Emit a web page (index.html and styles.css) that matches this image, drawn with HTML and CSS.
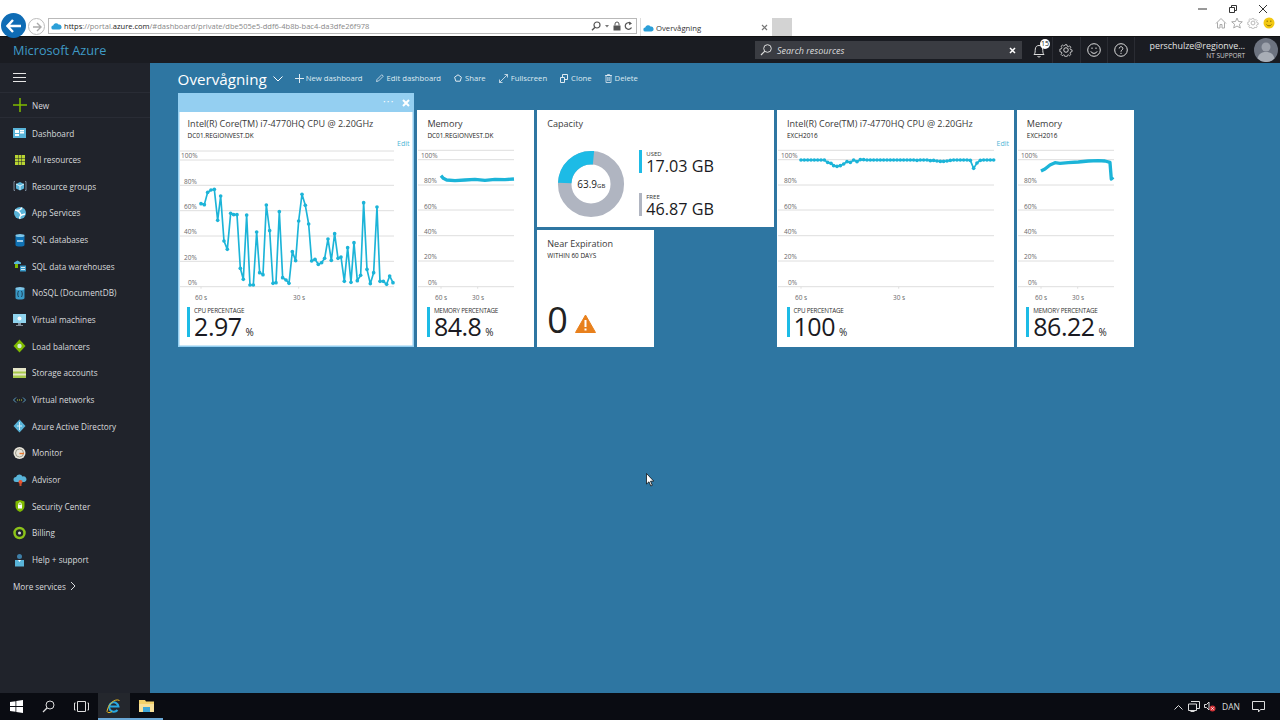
FILE: index.html
```html
<!DOCTYPE html>
<html lang="en">
<head>
    <meta charset="UTF-8">
    <meta name="viewport" content="width=device-width, initial-scale=1.0">
    <title>Overvågning - Microsoft Azure</title>
    <link rel="stylesheet" href="styles.css">
</head>
<body>
    <!-- Browser chrome -->
    <div class="browser">
        <div class="window-controls">
            <svg width="10" height="10" viewBox="0 0 10 10"><path d="M0 5H9" stroke="#333" fill="none"/></svg>
            <svg width="10" height="10" viewBox="0 0 10 10"><path d="M1.5 3.5h5v5h-5zM3.5 3.5v-2h5v5h-2" stroke="#333" fill="none"/></svg>
            <svg width="10" height="10" viewBox="0 0 10 10"><path d="M1 1L9 9M9 1L1 9" stroke="#333" fill="none"/></svg>
        </div>
        <div class="nav-row">
            <div class="back-btn">
                <svg width="16" height="14" viewBox="0 0 16 14"><path d="M7 1L1.5 7L7 13M2 7H15" stroke="#fff" stroke-width="2.4" fill="none"/></svg>
            </div>
            <div class="forward-btn">
                <svg width="10" height="10" viewBox="0 0 10 10"><path d="M5 1L9 5L5 9M9 5H1" stroke="#aaa" stroke-width="1.4" fill="none"/></svg>
            </div>
            <div class="address-bar">
                <svg class="cloud" width="11" height="8" viewBox="0 0 11 8"><path d="M2.5 7.5a2 2 0 0 1-.3-4A3 3 0 0 1 7.5 2.5a2.5 2.5 0 0 1 1 5z" fill="#2b9fd8"/></svg>
                <span class="url"><b>https</b>://portal.<b>azure.com</b>/#dashboard/private/dbe505e5-ddf6-4b8b-bac4-da3dfe26f978</span>
                <div class="address-tools">
                    <svg width="10" height="10" viewBox="0 0 10 10"><circle cx="6" cy="4" r="3" stroke="#555" fill="none" stroke-width="1.2"/><path d="M4 6.2L1 9.2" stroke="#555" stroke-width="1.4"/></svg>
                    <svg width="6" height="10" viewBox="0 0 6 10"><path d="M1 4h4L3 6.5z" fill="#777"/></svg>
                    <svg width="8" height="10" viewBox="0 0 8 10"><path d="M2 4.5V3a2 2 0 0 1 4 0v1.5" stroke="#555" fill="none"/><rect x="0.5" y="4.5" width="7" height="5" fill="#555"/></svg>
                    <svg width="9" height="10" viewBox="0 0 9 10"><path d="M7.5 6.5A3.3 3.3 0 1 1 6.5 2.3" stroke="#555" stroke-width="1.2" fill="none"/><path d="M5 0.5L8 2.5L5.2 4.2z" fill="#555"/></svg>
                </div>
            </div>
            <div class="browser-tab">
                <svg width="11" height="8" viewBox="0 0 11 8"><path d="M2.5 7.5a2 2 0 0 1-.3-4A3 3 0 0 1 7.5 2.5a2.5 2.5 0 0 1 1 5z" fill="#2b9fd8"/></svg>
                <span class="tab-title">Overvågning</span>
                <svg class="tab-close" width="7" height="7" viewBox="0 0 7 7"><path d="M1 1L6 6M6 1L1 6" stroke="#777" stroke-width="1.2"/></svg>
            </div>
            <div class="new-tab"></div>
            <div class="browser-tools">
                <svg width="12" height="12" viewBox="0 0 12 12"><path d="M1 6.5L6 1.5L11 6.5M2.5 5.5V11H5V7.5H7V11H9.5V5.5" stroke="#aaa" fill="none"/></svg>
                <svg width="12" height="12" viewBox="0 0 12 12"><path d="M6 1L7.5 4.5L11.3 4.8L8.4 7.3L9.3 11L6 9L2.7 11L3.6 7.3L.7 4.8L4.5 4.5z" stroke="#aaa" fill="none"/></svg>
                <svg width="12" height="12" viewBox="0 0 16 16"><use href="#gear" stroke="#aaa"/></svg>
                <svg width="12" height="12" viewBox="0 0 12 12"><circle cx="6" cy="6" r="5.5" fill="#f2c811"/><path d="M3.5 7.5a3 3 0 0 0 5 0" stroke="#8a6d00" fill="none"/><path d="M4.2 3.5v1.5M7.8 3.5v1.5" stroke="#8a6d00"/></svg>
            </div>
        </div>
    </div>

    <!-- Shared icon shapes -->
    <svg class="icon-defs" width="0" height="0">
        <defs>
            <g id="gear" fill="none" stroke-width="1.1">
                <circle cx="8" cy="8" r="2.6"/>
                <path d="M6.8 1h2.4l.4 2 1.5.7 1.8-1.1 1.6 1.7-1.1 1.7.7 1.5 2 .4v2.4l-2 .4-.7 1.5 1.1 1.8-1.7 1.6-1.7-1.1-1.5.7-.4 2H6.8l-.4-2-1.5-.7-1.8 1.1-1.6-1.7 1.1-1.7-.7-1.5-2-.4V6.8l2-.4.7-1.5-1.1-1.8 1.7-1.6 1.7 1.1 1.5-.7z" transform="translate(1.1 1.1) scale(.86)"/>
            </g>
            <marker id="dot" markerWidth="3" markerHeight="3" refX="1.5" refY="1.5" markerUnits="strokeWidth">
                <circle cx="1.5" cy="1.5" r="1.1" fill="#1cb4d8"/>
            </marker>
        </defs>
    </svg>

    <!-- Azure top bar -->
    <header class="topbar">
        <div class="brand">Microsoft Azure</div>
        <div class="search">
            <svg width="12" height="12" viewBox="0 0 12 12"><circle cx="7.5" cy="4.5" r="3.8" stroke="#ddd" fill="none"/><path d="M4.8 7.2L1 11" stroke="#ddd" stroke-width="1.2"/></svg>
            <span class="search-text">Search resources</span>
            <svg class="search-clear" width="7" height="7" viewBox="0 0 7 7"><path d="M1 1L6 6M6 1L1 6" stroke="#fff" stroke-width="1.5"/></svg>
        </div>
        <div class="top-icon bell">
            <svg width="14" height="15" viewBox="0 0 14 15"><path d="M2 11.5c1.5-1.5 1-3 1.3-5.5C3.6 3.5 5 2.5 7 2.5S10.4 3.5 10.7 6c.3 2.5-.2 4 1.3 5.5zM5.5 13a1.6 1.6 0 0 0 3 0" stroke="#ddd" fill="none"/></svg>
            <span class="badge">15</span>
        </div>
        <div class="top-icon">
            <svg width="14" height="14" viewBox="0 0 16 16"><use href="#gear" stroke="#ddd"/></svg>
        </div>
        <div class="top-icon">
            <svg width="14" height="14" viewBox="0 0 14 14"><circle cx="7" cy="7" r="6.3" stroke="#ddd" fill="none"/><path d="M3.8 8.3a3.5 3.5 0 0 0 6.4 0" stroke="#ddd" fill="none"/><path d="M5 4.5v1.5M9 4.5v1.5" stroke="#ddd"/></svg>
        </div>
        <div class="top-icon">
            <svg width="14" height="14" viewBox="0 0 14 14"><circle cx="7" cy="7" r="6.3" stroke="#ddd" fill="none"/><path d="M5.2 5.5a1.8 1.8 0 1 1 2.8 1.5c-.7.5-1 .8-1 1.7" stroke="#ddd" fill="none"/><path d="M7 9.8v1.2" stroke="#ddd"/></svg>
        </div>
        <div class="account">
            <div class="account-name">perschulze@regionve...</div>
            <div class="account-org">NT SUPPORT</div>
        </div>
        <svg class="avatar" width="24" height="24" viewBox="0 0 24 24"><circle cx="12" cy="12" r="12" fill="#6d7380"/><circle cx="12" cy="9" r="4.5" fill="#9ca1ab"/><path d="M3.5 20.5c1-5 4.5-6.5 8.5-6.5s7.5 1.5 8.5 6.5a12 12 0 0 1-17 0z" fill="#a8adb6"/></svg>
    </header>

    <div class="workspace">
        <!-- Sidebar -->
        <nav class="sidebar">
            <div class="hamburger">
                <svg width="13" height="9" viewBox="0 0 13 9"><path d="M0 .5H13M0 4.5H13M0 8.5H13" stroke="#e6e6e6"/></svg>
            </div>
            <a class="nav-item nav-new">
                <svg width="14" height="14" viewBox="0 0 14 14"><path d="M7 0V14M0 7H14" stroke="#7fba00" stroke-width="1.5"/></svg>
                New
            </a>
            <div class="nav-list">
                <a class="nav-item">
                    <svg width="14" height="14" viewBox="0 0 14 14"><rect y="2" width="13" height="10" fill="#59b4d9"/><path d="M2 4h4v3H2zM7 4h4v1.5H7zM7 6h4v1.5H7zM2 8h4v2H2z" fill="#fff"/></svg>
                    Dashboard
                </a>
                <a class="nav-item">
                    <svg width="14" height="14" viewBox="0 0 14 14"><path d="M2 2h3v3H2zM5.5 2h3v3h-3zM9 2h3v3H9zM2 5.5h3v3H2zM5.5 5.5h3v3h-3zM9 5.5h3v3H9zM2 9h3v3H2zM5.5 9h3v3h-3zM9 9h3v3H9z" fill="#b8d432"/></svg>
                    All resources
                </a>
                <a class="nav-item">
                    <svg width="14" height="14" viewBox="0 0 14 14"><path d="M7 3l4 2v4.5l-4 2-4-2V5z" fill="#59b4d9"/><path d="M3 5l4 2 4-2M7 7v4" stroke="#fff" stroke-width=".8" fill="none"/><path d="M2 2.5H1v9h1M12 2.5h1v9h-1" stroke="#7a8a9a" fill="none"/></svg>
                    Resource groups
                </a>
                <a class="nav-item">
                    <svg width="14" height="14" viewBox="0 0 14 14"><circle cx="7" cy="7" r="6" fill="#59b4d9"/><path d="M2 4c3 .5 5 2 6 5M7 13c-1-2 0-4 5-5M9 1.5C8 3.5 6 4.5 4 4.5" stroke="#fff" stroke-width="1.3" fill="none"/></svg>
                    App Services
                </a>
                <a class="nav-item">
                    <svg width="14" height="14" viewBox="0 0 14 14"><path d="M2.5 2.5v9.5c0 2 9 2 9 0V2.5z" fill="#0f72b5"/><ellipse cx="7" cy="2.5" rx="4.5" ry="1.5" fill="#7fc6e8"/><path d="M4 8h6" stroke="#cfeaf7" stroke-width="1.5"/></svg>
                    SQL databases
                </a>
                <a class="nav-item">
                    <svg width="14" height="14" viewBox="0 0 14 14"><path d="M1 3.5L4.5 1.5L8 3.5V5H1z" fill="#59b4d9"/><rect x="2" y="5" width="3" height="4" fill="#7fba00"/><path d="M7 6.5h6v6H7z" fill="#3999c6"/><path d="M8 8.5h4M8 10.5h4" stroke="#fff" stroke-width=".8"/></svg>
                    SQL data warehouses
                </a>
                <a class="nav-item">
                    <svg width="14" height="14" viewBox="0 0 14 14"><path d="M2.5 2.5v9.5c0 2 9 2 9 0V2.5z" fill="#3999c6"/><ellipse cx="7" cy="2.5" rx="4.5" ry="1.5" fill="#7fc6e8"/><path d="M5.5 5c-1 2-1 4 0 6M8.5 5c1 2 1 4 0 6" stroke="#1b3f56" fill="none"/></svg>
                    NoSQL (DocumentDB)
                </a>
                <a class="nav-item">
                    <svg width="14" height="14" viewBox="0 0 14 14"><rect y="1" width="13" height="9" fill="#8fd3ee"/><circle cx="6.5" cy="5.5" r="2" fill="#fff"/><path d="M5 10h3v2H5zM3 12h7v1H3z" fill="#7f8b96"/></svg>
                    Virtual machines
                </a>
                <a class="nav-item">
                    <svg width="14" height="14" viewBox="0 0 14 14"><path d="M6.5.5l6 6.5-6 6.5L.5 7z" fill="#7fba00"/><circle cx="6.5" cy="7" r="2.2" fill="#d4ecd0"/></svg>
                    Load balancers
                </a>
                <a class="nav-item">
                    <svg width="14" height="14" viewBox="0 0 14 14"><rect y="2" width="13" height="10" fill="#e5e5c8"/><path d="M0 5.5h13v2H0zM0 9.5h13V12H0z" fill="#a5c84a"/></svg>
                    Storage accounts
                </a>
                <a class="nav-item">
                    <svg width="14" height="14" viewBox="0 0 14 14"><path d="M3 4.5L.5 7L3 9.5M10 4.5L12.5 7L10 9.5" stroke="#5a9ec4" fill="none"/><path d="M4 7h1M6 7h1M8 7h1" stroke="#b8d432"/></svg>
                    Virtual networks
                </a>
                <a class="nav-item">
                    <svg width="14" height="14" viewBox="0 0 14 14"><path d="M6.5.5l6 6.5-6 6.5L.5 7z" fill="#59b4d9"/><path d="M6.5 3v8M4 7h5" stroke="#d7f0fa"/></svg>
                    Azure Active Directory
                </a>
                <a class="nav-item">
                    <svg width="14" height="14" viewBox="0 0 14 14"><circle cx="6.5" cy="7" r="6" fill="#e8e4da"/><circle cx="6.5" cy="7" r="4" fill="none" stroke="#9a9a8c"/><path d="M6.5 7.5H11" stroke="#e8772e" stroke-width="1.4"/></svg>
                    Monitor
                </a>
                <a class="nav-item">
                    <svg width="14" height="14" viewBox="0 0 14 14"><path d="M3 9a2.5 2.5 0 0 1 0-5 3.5 3.5 0 0 1 6.5-.5A2.8 2.8 0 0 1 11.5 9z" fill="#59b4d9"/><circle cx="7.5" cy="9" r="2" fill="#e8522e"/><path d="M6.5 11h2v2h-2z" fill="#c8502a"/></svg>
                    Advisor
                </a>
                <a class="nav-item">
                    <svg width="14" height="14" viewBox="0 0 14 14"><path d="M7 1l4.5 1.5V7c0 3-2 5-4.5 6C4.5 12 2.500 10 2.500 7V2.500z" fill="#7fba00"/><rect x="5" y="6" width="4" height="3.5" fill="#fff"/><path d="M5.8 6V5a1.2 1.2 0 0 1 2.4 0v1" stroke="#fff" fill="none"/></svg>
                    Security Center
                </a>
                <a class="nav-item">
                    <svg width="14" height="14" viewBox="0 0 14 14"><circle cx="6.5" cy="7" r="5" fill="#20232b" stroke="#8cc21a" stroke-width="2.5"/><circle cx="6.5" cy="7" r="1.5" fill="#d8dadd"/></svg>
                    Billing
                </a>
                <a class="nav-item">
                    <svg width="14" height="14" viewBox="0 0 14 14"><circle cx="6.5" cy="3.5" r="2.5" fill="#3e7fa8"/><path d="M2 7h9v6.5H2z" fill="#59b4d9"/><path d="M5 7l1.5 2L8 7z" fill="#fff"/></svg>
                    Help + support
                </a>
                <a class="nav-item nav-more">
                    More services
                    <svg width="6" height="10" viewBox="0 0 6 10"><path d="M1 1L5 5L1 9" stroke="#d8dadd" fill="none"/></svg>
                </a>
            </div>
        </nav>

        <!-- Dashboard -->
        <main class="dashboard">
            <div class="cmdbar">
                <h1 class="dash-title">Overvågning</h1>
                <svg class="dash-chevron" width="10" height="6" viewBox="0 0 10 6"><path d="M.5.5L5 5L9.5.5" stroke="#fff" fill="none"/></svg>
                <a class="cmd cmd-new">
                    <svg width="9" height="9" viewBox="0 0 9 9"><path d="M4.5 0V9M0 4.5H9" stroke="#dfeaf1"/></svg>
                    New dashboard
                </a>
                <a class="cmd">
                    <svg width="8" height="8" viewBox="0 0 8 8"><path d="M.5 7.5L1 5.5L5.8.7L7.3 2.2L2.5 7z" stroke="#dfeaf1" fill="none" stroke-width=".8"/></svg>
                    Edit dashboard
                </a>
                <a class="cmd">
                    <svg width="8" height="8" viewBox="0 0 8 8"><path d="M4 .8L7.4 3.2L6.2 7.2H1.8L.6 3.2z" stroke="#dfeaf1" fill="none"/></svg>
                    Share
                </a>
                <a class="cmd">
                    <svg width="9" height="9" viewBox="0 0 9 9"><path d="M.5 8.5L8.5.5M5.5.5h3v3M.5 5.5v3h3" stroke="#dfeaf1" fill="none" stroke-width=".8"/></svg>
                    Fullscreen
                </a>
                <a class="cmd">
                    <svg width="8" height="9" viewBox="0 0 8 9"><path d="M.5 3.5h4v5h-4zM2.5 3.5v-3h5v5h-3" stroke="#dfeaf1" fill="none"/></svg>
                    Clone
                </a>
                <a class="cmd">
                    <svg width="7" height="9" viewBox="0 0 7 9"><path d="M1 1.5h5V8.5H1zM0 1.5h7M2.5 1.5V.5h2v1M2.8 3v4M4.2 3v4" stroke="#dfeaf1" fill="none" stroke-width=".8"/></svg>
                    Delete
                </a>
            </div>

            <div class="tiles">
                <!-- CPU dc01 -->
                <section class="tile tile-wide tile-selected">
                    <div class="tile-bar">
                        <span class="tile-dots">···</span>
                        <svg width="8" height="8" viewBox="0 0 8 8"><path d="M1 1L7 7M7 1L1 7" stroke="#fff" stroke-width="2"/></svg>
                    </div>
                    <a class="edit-link">Edit</a>
                    <div class="tile-head">
                        <h2>Intel(R) Core(TM) i7-4770HQ CPU @ 2.20GHz</h2>
                        <p>DC01.REGIONVEST.DK</p>
                    </div>
                    <svg class="chart" width="236" height="156" viewBox="3 58 236 156">
                        <path class="grid" d="M5 61H219M5 70H219M5 95.3H219M5 120.7H219M5 146H219M5 171.3H219M5 196.7H219"/>
                        <text x="6" y="68">100%</text><text x="9" y="93.5">80%</text><text x="9" y="118.8">60%</text><text x="9" y="144.2">40%</text><text x="9" y="169.5">20%</text><text x="13" y="194.8">0%</text>
                        <path class="grid" d="M26 196.7v2M123.7 196.7v2"/>
                        <text x="20" y="210">60 s</text><text x="118" y="210">30 s</text>
                        <polyline class="line" transform="scale(.3333)" points="78,341 88,344 98,307 108,300 118,298 128,391 137,318 147,453 157,478 167,370 176,374 186,374 196,535 205,568 215,375 225,585 235,585 245,426 254,548 264,554 274,345 284,422 294,580 303,578 313,365 323,563 333,570 342,580 352,485 362,512 371,393 381,313 391,346 401,402 410,513 420,508 430,523 440,518 449,505 459,447 469,511 479,431 489,505 498,501 508,574 518,473 528,577 537,458 547,572 557,556 566,338 576,538 586,581 596,548 606,351 615,574 625,574 635,583 644,558 654,578"/>
                    </svg>
                    <div class="metric">
                        <span class="metric-bar"></span>
                        <div>
                            <div class="metric-label">CPU PERCENTAGE</div>
                            <div class="metric-value">2.97 <small>%</small></div>
                        </div>
                    </div>
                </section>

                <!-- Memory dc01 -->
                <section class="tile tile-tall">
                    <div class="tile-head">
                        <h2>Memory</h2>
                        <p>DC01.REGIONVEST.DK</p>
                    </div>
                    <svg class="chart" width="117" height="156" viewBox="2 43 117 156">
                        <path class="grid" d="M3 45.3H99M3 54.7H99M3 80H99M3 105H99M3 130.7H99M3 156H99M3 181.7H99"/>
                        <text x="6" y="53">100%</text><text x="9" y="78.3">80%</text><text x="9" y="103.5">60%</text><text x="9" y="128.9">40%</text><text x="9" y="154.2">20%</text><text x="13" y="179.5">0%</text>
                        <path class="grid" d="M26 181.7v2M62.7 181.7v2"/>
                        <text x="20" y="195">60 s</text><text x="57" y="195">30 s</text>
                        <polyline class="line line-thick" transform="scale(.3333)" points="78,212 85,220 95,225 120,227 150,225 180,223 210,226 240,223 270,224 297,222"/>
                    </svg>
                    <div class="metric">
                        <span class="metric-bar"></span>
                        <div>
                            <div class="metric-label">MEMORY PERCENTAGE</div>
                            <div class="metric-value">84.8 <small>%</small></div>
                        </div>
                    </div>
                </section>

                <!-- Capacity -->
                <section class="tile tile-capacity">
                    <div class="tile-head">
                        <h2>Capacity</h2>
                    </div>
                    <div class="capacity-body">
                        <div class="donut">
                            <svg width="68" height="68" viewBox="0 0 68 68">
                                <circle class="donut-free" cx="34" cy="34" r="26.3"/>
                                <circle class="donut-used" cx="34" cy="34" r="26.3" pathLength="100" stroke-dasharray="26 74" transform="rotate(182 34 34)"/>
                            </svg>
                            <span class="donut-total">63.9<small>GB</small></span>
                        </div>
                        <div class="capacity-legend">
                            <div class="legend-row">
                                <span class="metric-bar"></span>
                                <div class="legend-text">
                                    <div class="legend-label">USED</div>
                                    <div class="legend-value">17.03 GB</div>
                                </div>
                            </div>
                            <div class="legend-row">
                                <span class="metric-bar metric-bar-grey"></span>
                                <div class="legend-text">
                                    <div class="legend-label">FREE</div>
                                    <div class="legend-value">46.87 GB</div>
                                </div>
                            </div>
                        </div>
                    </div>
                </section>

                <!-- Near expiration -->
                <section class="tile tile-expire">
                    <div class="tile-head">
                        <h2>Near Expiration</h2>
                        <p>WITHIN 60 DAYS</p>
                    </div>
                    <div class="expire-body">
                        <span class="expire-count">0</span>
                        <svg width="21" height="19" viewBox="0 0 21 19"><path d="M10.5 1L20.5 18.5H.5z" fill="#e8801c" stroke="#e8801c" stroke-linejoin="round"/><path d="M10.5 6v7M10.5 14.5v2" stroke="#fff" stroke-width="2"/></svg>
                    </div>
                </section>

                <!-- CPU exch -->
                <section class="tile tile-wide">
                    <a class="edit-link">Edit</a>
                    <div class="tile-head">
                        <h2>Intel(R) Core(TM) i7-4770HQ CPU @ 2.20GHz</h2>
                        <p>EXCH2016</p>
                    </div>
                    <svg class="chart" width="236" height="156" viewBox="2 43 236 156">
                        <path class="grid" d="M3 45.3H219M3 54.7H219M3 80H219M3 105H219M3 130.7H219M3 156H219M3 181.7H219"/>
                        <text x="6" y="53">100%</text><text x="9" y="78.3">80%</text><text x="9" y="103.5">60%</text><text x="9" y="128.9">40%</text><text x="9" y="154.2">20%</text><text x="13" y="179.5">0%</text>
                        <path class="grid" d="M26 181.7v2M123.7 181.7v2"/>
                        <text x="20" y="195">60 s</text><text x="118" y="195">30 s</text>
                        <polyline class="line" transform="scale(.3333)" points="78,165 88,165 98,165 108,165 118,165 128,165 138,165 148,165 158,172 168,175 176,182 186,184 196,182 206,177 216,170 226,172 236,165 246,170 256,164 266,164 276,165 286,165 296,165 306,165 316,165 326,165 336,165 346,165 356,165 366,165 376,165 386,165 396,165 406,165 416,165 426,166 436,165 446,165 456,165 466,167 476,166 486,168 496,169 506,169 516,168 526,166 536,165 546,165 556,165 566,165 576,165 586,166 596,190 606,174 616,166 626,165 636,165 646,165 656,165"/>
                    </svg>
                    <div class="metric">
                        <span class="metric-bar"></span>
                        <div>
                            <div class="metric-label">CPU PERCENTAGE</div>
                            <div class="metric-value">100 <small>%</small></div>
                        </div>
                    </div>
                </section>

                <!-- Memory exch -->
                <section class="tile tile-tall">
                    <div class="tile-head">
                        <h2>Memory</h2>
                        <p>EXCH2016</p>
                    </div>
                    <svg class="chart" width="117" height="156" viewBox="242 43 117 156">
                        <path class="grid" d="M243 45.3H339M243 54.7H339M243 80H339M243 105H339M243 130.7H339M243 156H339M243 181.7H339"/>
                        <text x="246" y="53">100%</text><text x="249" y="78.3">80%</text><text x="249" y="103.5">60%</text><text x="249" y="128.9">40%</text><text x="249" y="154.2">20%</text><text x="253" y="179.5">0%</text>
                        <path class="grid" d="M266 181.7v2M302.7 181.7v2"/>
                        <text x="260" y="195">60 s</text><text x="297" y="195">30 s</text>
                        <polyline class="line line-thick" transform="scale(.3333)" points="798,198 810,192 825,180 840,173 855,175 880,173 910,171 940,168 970,167 990,168 1005,172 1009,222 1015,217"/>
                    </svg>
                    <div class="metric">
                        <span class="metric-bar"></span>
                        <div>
                            <div class="metric-label">MEMORY PERCENTAGE</div>
                            <div class="metric-value">86.22 <small>%</small></div>
                        </div>
                    </div>
                </section>
            </div>
        </main>
    </div>

    <!-- Windows taskbar -->
    <footer class="taskbar">
        <div class="task-btn">
            <svg width="13" height="13" viewBox="0 0 13 13"><path d="M0 2l5.5-.8V6H0zM6.3 1.1L13 0v6H6.3zM0 7h5.5v4.8L0 11zM6.3 7H13v6l-6.700-1z" fill="#fff"/></svg>
        </div>
        <div class="task-btn">
            <svg width="13" height="13" viewBox="0 0 13 13"><circle cx="8" cy="5" r="4" stroke="#ddd" fill="none"/><path d="M5 8L1 12" stroke="#ddd" stroke-width="1.3"/></svg>
        </div>
        <div class="task-btn">
            <svg width="15" height="11" viewBox="0 0 15 11"><path d="M3.5.5h8v10h-8zM1.5 2H.5v7h1M13.5 2h1v7h-1" stroke="#ddd" fill="none"/></svg>
        </div>
        <div class="task-btn task-active">
            <svg width="16" height="16" viewBox="0 0 16 16"><path d="M3.5 8.5H12.500A4.700 4.700 0 1 0 11.500 12" fill="none" stroke="#29a8e0" stroke-width="2"/><path d="M13.500 2.500C9 0 2 6 1 13.500C1.500 15 4 15 6 13.500" fill="none" stroke="#e8b923"/></svg>
        </div>
        <div class="task-btn task-open">
            <svg width="15" height="13" viewBox="0 0 15 13"><path d="M0 1h6l1 1.5h8V13H0z" fill="#f2d16b"/><path d="M0 5h15v8H0z" fill="#f7e09a"/><path d="M4 8h7v5H4z" fill="#3ca6d8"/></svg>
        </div>
        <div class="tray">
            <svg width="9" height="6" viewBox="0 0 9 6"><path d="M.5 5.5L4.5 1.5L8.5 5.5" stroke="#ddd" fill="none"/></svg>
            <svg class="tray-net" width="12" height="11" viewBox="0 0 12 11"><path d="M3 .5h8.5v7H9M.5 3h8v6.500H.5z" stroke="#ddd" fill="none"/><path d="M2.5 10.5h4" stroke="#ddd"/></svg>
            <svg class="tray-sound" width="12" height="11" viewBox="0 0 12 11"><path d="M.5 3.5h2L5 1v8L2.5 6.5h-2z" stroke="#ddd" fill="none"/><circle cx="8.5" cy="7.5" r="3" fill="#d13438"/><path d="M7.3 6.3l2.4 2.4M9.7 6.3L7.3 8.7" stroke="#fff" stroke-width=".8"/></svg>
            <span class="tray-lang">DAN</span>
            <svg class="tray-note" width="13" height="12" viewBox="0 0 13 12"><path d="M.5.5h12v8H8.5L6.5 11V8.5h-6z" stroke="#ddd" fill="none"/></svg>
        </div>
    </footer>

    <!-- Mouse pointer over the page -->
    <svg class="pointer" width="8" height="14" viewBox="0 0 8 14"><path d="M.5.5V11L3 8.8L4.8 13L6.3 12.3L4.5 8.2H7.8z" fill="#fff" stroke="#000" stroke-width=".7"/></svg>
</body>
</html>
```

FILE: styles.css
```css
* {
    box-sizing: border-box;
}

html, body {
    height: 100%;
}

body {
    margin: 0;
    width: 1280px;
    height: 720px;
    overflow: hidden;
    position: relative;
    display: flex;
    flex-direction: column;
    font-family: "Open Sans", "Noto Sans", sans-serif;
    background-color: #2e76a2;
}

svg {
    display: block;
    flex: none;
}

.icon-defs {
    position: absolute;
}

/* Browser chrome */
.browser {
    height: 37px;
    background-color: #fff;
    border-bottom: 1px solid #111;
    position: relative;
}

.window-controls {
    display: flex;
    justify-content: flex-end;
    gap: 20px;
    height: 18px;
    padding: 4px 12px 0 0;
}

.nav-row {
    display: flex;
    align-items: flex-start;
    height: 18px;
}

.back-btn {
    width: 25px;
    height: 25px;
    margin: -5px 0 0 1px;
    border-radius: 50%;
    background-color: #0f6cb5;
    display: flex;
    align-items: center;
    justify-content: center;
    position: relative;
}

.forward-btn {
    width: 17px;
    height: 17px;
    margin: 0 3px 0 2px;
    border: 1px solid #bbb;
    border-radius: 50%;
    display: flex;
    align-items: center;
    justify-content: center;
}

.address-bar {
    width: 589px;
    height: 16px;
    border: 1px solid #b9b9b9;
    display: flex;
    align-items: center;
    padding: 0 3px 0 2px;
    gap: 2px;
}

.url {
    font-size: 7.55px;
    color: #888;
    white-space: nowrap;
}

.url b {
    font-weight: 400;
    color: #222;
}

.address-tools {
    margin-left: auto;
    display: flex;
    gap: 3px;
    align-items: center;
}

.browser-tab {
    width: 132px;
    height: 18px;
    margin-left: 3px;
    display: flex;
    align-items: center;
    padding: 1px 4px 0 2px;
    gap: 2px;
    border-left: 1px solid #ddd;
}

.tab-title {
    font-size: 7.7px;
    color: #333;
}

.tab-close {
    margin-left: auto;
}

.new-tab {
    width: 20px;
    height: 18px;
    background-color: #d3d3d3;
}

.browser-tools {
    margin: -1px 5px 0 auto;
    display: flex;
    gap: 4px;
}

/* Azure top bar */
.topbar {
    height: 26px;
    background-color: #1a1c22;
    display: flex;
    align-items: center;
    color: #fff;
}

.brand {
    width: 755px;
    padding-left: 13px;
    font-size: 12.7px;
    color: #3f9ac6;
}

.search {
    width: 267px;
    height: 18px;
    background-color: #3a3c42;
    display: flex;
    align-items: center;
    padding: 0 6px 0 5px;
    gap: 5px;
}

.search-text {
    font-size: 9px;
    font-style: italic;
    color: #ddd;
}

.search-clear {
    margin-left: auto;
}

.top-icon {
    width: 27.3px;
    height: 26px;
    display: flex;
    align-items: center;
    justify-content: center;
    border-right: 1px solid #2a2c33;
    position: relative;
}

.bell {
    margin-left: 4px;
}

.badge {
    position: absolute;
    top: 2px;
    left: 14px;
    width: 10px;
    height: 10px;
    border-radius: 50%;
    background-color: #fff;
    color: #222;
    font-size: 7px;
    line-height: 10px;
    text-align: center;
}

.account {
    width: 110px;
    text-align: right;
}

.account-name {
    font-size: 8.9px;
    line-height: 11px;
    white-space: nowrap;
    color: #e4e4e4;
}

.account-org {
    font-size: 6.5px;
    line-height: 9px;
    color: #d0d0d0;
}

.avatar {
    margin-left: 9px;
}

/* Sidebar */
.workspace {
    flex: 1;
    display: flex;
    min-height: 0;
}

.sidebar {
    width: 150px;
    background-color: #20232b;
    color: #d8dadd;
}

.hamburger {
    height: 29px;
    padding: 10px 0 0 13px;
}

.nav-item {
    height: 26.67px;
    display: flex;
    align-items: center;
    gap: 5px;
    padding-left: 13px;
    font-size: 8.2px;
    white-space: nowrap;
}

.nav-new {
    height: 26px;
    border-top: 1px solid #292c35;
    border-bottom: 1px solid #292c35;
}

.nav-list {
    padding-top: 1.7px;
}

.nav-more {
    gap: 4px;
}

/* Dashboard */
.dashboard {
    flex: 1;
    padding-left: 27.6px;
}

.cmdbar {
    height: 32px;
    display: flex;
    align-items: center;
    gap: 13px;
    color: #dfeaf1;
}

.dash-title {
    margin: 0;
    font-size: 15.2px;
    font-weight: 400;
    color: #fff;
}

.dash-chevron {
    margin-left: -7px;
}

.cmd {
    display: flex;
    align-items: center;
    gap: 3px;
    font-size: 7.7px;
    margin-top: -2px;
}

.cmd-new {
    gap: 2px;
    margin-left: -1px;
}

.tiles {
    margin-top: 15px;
    display: grid;
    grid-template-columns: repeat(8, 117px);
    grid-template-rows: repeat(2, 117px);
    gap: 3px 2.9px;
}

.tile {
    background-color: #fff;
    position: relative;
    color: #3a3a3a;
}

.tile-wide {
    grid-column: span 2;
    grid-row: span 2;
}

.tile-tall {
    grid-row: span 2;
}

.tile-capacity {
    grid-column: span 2;
}

.tile-expire {
    grid-area: 2 / 4;
}

.tile-selected {
    box-shadow: inset 0 0 0 1.5px #94cff1;
}

.tile-bar {
    position: absolute;
    top: -17px;
    left: 0;
    right: 0;
    height: 19px;
    background-color: #94cff1;
    display: flex;
    align-items: center;
    justify-content: flex-end;
    gap: 8px;
    padding-right: 4px;
}

.tile-dots {
    color: #fff;
    font-size: 10px;
    line-height: 10px;
    letter-spacing: 1.2px;
    margin-top: -3px;
}

.edit-link {
    position: absolute;
    top: 29px;
    right: 5px;
    font-size: 7px;
    color: #4fb6d6;
}

.tile-head {
    height: 38px;
    padding: 8px 10px 0;
}

.tile-head h2 {
    margin: 0;
    font-size: 9.06px;
    line-height: 12px;
    font-weight: 400;
    white-space: nowrap;
}

.tile-head p {
    margin: 2px 0 0;
    font-size: 6.4px;
    line-height: 8px;
    color: #222;
}

.chart text {
    font-size: 6.5px;
    fill: #6a6a6a;
}

.grid {
    stroke: #dedede;
    stroke-width: 1;
    fill: none;
}

.line {
    fill: none;
    stroke: #1cb4d8;
    stroke-width: 5;
    stroke-linejoin: round;
    marker-start: url(#dot);
    marker-mid: url(#dot);
    marker-end: url(#dot);
}

.line-thick {
    stroke-width: 10;
    marker: none;
}

.metric {
    display: flex;
    gap: 4px;
    padding: 3px 0 0 9.5px;
}

.metric-bar {
    display: block;
    flex: none;
    width: 3px;
    height: 30px;
    background-color: #1dbbe6;
}

.metric-bar-grey {
    background-color: #b0b5c1;
}

.metric-label {
    font-size: 6.3px;
    line-height: 8px;
    letter-spacing: -.2px;
    white-space: nowrap;
    color: #333;
}

.metric-value {
    font-size: 25px;
    line-height: 22px;
    letter-spacing: -.5px;
    white-space: nowrap;
    color: #1a1a22;
}

.metric-value small {
    font-size: 10px;
    letter-spacing: 0;
    margin-left: -2px;
}

/* Capacity tile */
.capacity-body {
    display: flex;
    padding-left: 20px;
}

.donut {
    position: relative;
    width: 68px;
    height: 68px;
    margin-top: 2px;
}

.donut circle {
    fill: none;
    stroke-width: 13.5;
}

.donut-free {
    stroke: #b0b5c1;
}

.donut-used {
    stroke: #1dbbe6;
}

.donut-total {
    position: absolute;
    top: 0;
    left: 0;
    right: 0;
    line-height: 68px;
    text-align: center;
    font-size: 10px;
    color: #222;
}

.donut-total small {
    font-size: 6px;
}

.capacity-legend {
    margin: 2px 0 0 14px;
    display: flex;
    flex-direction: column;
    gap: 19px;
}

.capacity-legend .metric-bar {
    height: 23px;
}

.legend-row {
    display: flex;
    gap: 4px;
}

.legend-text {
    padding-top: 1px;
}

.legend-label {
    font-size: 6px;
    line-height: 7px;
    color: #333;
}

.legend-value {
    font-size: 16.2px;
    line-height: 16px;
    white-space: nowrap;
    color: #1a1a22;
}

/* Near expiration tile */
.expire-body {
    display: flex;
    align-items: center;
    gap: 7px;
    padding: 30px 0 0 10px;
}

.expire-count {
    font-size: 36px;
    line-height: 44px;
    color: #222;
}

.expire-body svg {
    margin-top: 6px;
}

/* Taskbar */
.taskbar {
    height: 27px;
    background-color: #0a0c12;
    display: flex;
    color: #ddd;
}

.task-btn {
    width: 32.5px;
    height: 27px;
    display: flex;
    align-items: center;
    justify-content: center;
}

.task-active {
    background-color: #24272d;
    border-bottom: 2px solid #6aa8d6;
}

.task-open {
    border-bottom: 2px solid #6aa8d6;
}

.tray {
    margin-left: auto;
    display: flex;
    align-items: center;
    padding-right: 15px;
}

.tray-net {
    margin-left: 5px;
}

.tray-sound {
    margin-left: 4px;
}

.tray-lang {
    margin-left: 6px;
    font-size: 8.5px;
}

.tray-note {
    margin-left: 12px;
}

.pointer {
    position: absolute;
    left: 646px;
    top: 473px;
}
```
